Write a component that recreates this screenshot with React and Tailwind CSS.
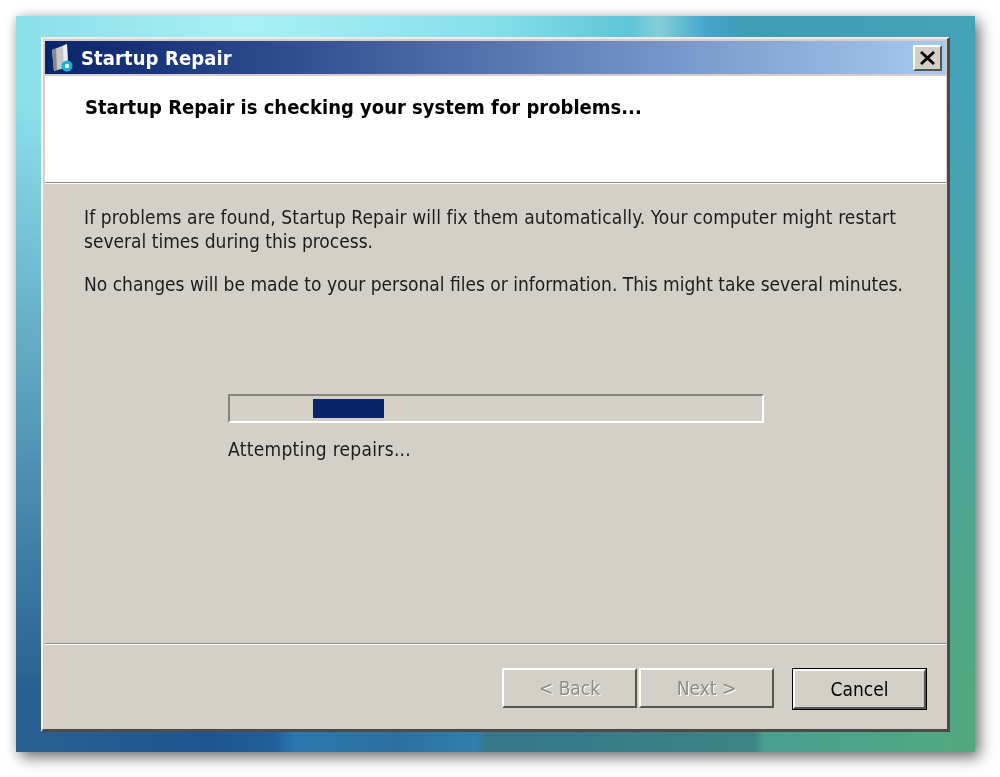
import React from 'react';

const font = "font-['DejaVu_Sans_Condensed','DejaVu_Sans',sans-serif]";

function DriveIcon() {
  return (
    <svg width="26" height="30" viewBox="0 0 26 30" className="shrink-0">
      <path d="M3 7 L18 1 L19 24 L5 28 Z" fill="#c4c7c7" />
      <path d="M3 7 L7 5.5 L8 27 L5 28 Z" fill="#868a8c" />
      <path d="M14 3 L18 1 L19 24 L15 25 Z" fill="#eceded" />
      <circle cx="18" cy="23" r="5.5" fill="#1fb0d8" />
      <circle cx="18" cy="23" r="2.2" fill="#e8fbff" />
    </svg>
  );
}

function WizardButton({ children, disabled }) {
  return (
    <div className={`h-10 flex items-center justify-center bg-[#d4d0c8] border-2 border-t-white border-l-white border-r-[#57554f] border-b-[#57554f] text-[19px] ${disabled ? "w-[135px] text-[#8f8c85] [text-shadow:1px_1px_0_#fff]" : "w-[133px] text-black"}`}>
      {children}
    </div>
  );
}

export default function App() {
  return (
    <div className={`w-[1000px] h-[777px] bg-white pt-4 pl-4 blur-[0.4px] ${font}`}>
      <div className="relative w-[959px] h-[736px] pt-[21px] pl-[25px] bg-[linear-gradient(to_right,#2a6090_0%,#1f5592_20%,#215e9a_27%,#2a78b0_29%,#2c70a0_40%,#2f80ae_48%,#35768a_49%,#3c8485_77%,#48a090_78%,#52a97f_100%)] shadow-[5px_6px_14px_rgba(0,0,0,0.5),0_0_10px_rgba(0,0,0,0.15)]">
        <div className="absolute inset-0 bg-[linear-gradient(to_right,#8adfe8_0%,#a8f0f6_24%,#85dfea_50%,#5fc5d8_64%,#84d0d8_67%,#45a5cc_72%,#3f9cb5_76%,#45a2b8_100%)] [mask-image:linear-gradient(to_bottom,black_12%,transparent_92%)]" />
        <div className="relative w-[909px] h-[695px] flex flex-col bg-[#d4d0c8] border-t-2 border-l-2 border-t-[#efebe3] border-l-white border-r-[3px] border-b-[3px] border-r-[#4b4a47] border-b-[#4b4a47] pt-0.5 pl-0.5 pr-px">
          <div className="h-[33px] flex items-center pl-1 pr-1 bg-[linear-gradient(to_right,#0a246a_0%,#2c4a8c_25%,#6f8fc4_65%,#a6caf0_100%)]">
            <DriveIcon />
            <span className="ml-1.5 text-white font-bold text-[20px] tracking-[0.1px] leading-none">Startup Repair</span>
            <div className="ml-auto w-[29px] h-[26px] flex items-center justify-center bg-[#d4d0c8] border-2 border-t-white border-l-white border-r-[#57554f] border-b-[#57554f]">
              <svg width="17" height="14" viewBox="0 0 17 14">
                <path d="M2 1 L15 13 M15 1 L2 13" stroke="#000" strokeWidth="2.8" />
              </svg>
            </div>
          </div>
          <div className="mt-0.5 h-[106px] bg-white pl-10 pt-[18px]">
            <h1 className="text-[20px] leading-[26px] font-bold text-black">Startup Repair is checking your system for problems...</h1>
          </div>
          <div className="h-[2px] bg-[#8d8a83] border-b border-white" />
          <div className="flex-1 flex flex-col pl-[39px] pt-[21px] text-[19px] text-[#1c1c1c]">
            <p className="leading-6 w-[860px]">
              <span className="block tracking-[0.13px]">If problems are found, Startup Repair will fix them automatically. Your computer might restart</span>
              <span className="block">several times during this process.</span>
            </p>
            <p className="leading-6 mt-[19px] whitespace-nowrap">No changes will be made to your personal files or information. This might take several minutes.</p>
            <div className="ml-[144px] mt-[98px] w-[536px] h-[29px] bg-[#d4d0c8] border-2 border-t-[#87847d] border-l-[#87847d] border-r-white border-b-white p-[3px]">
              <div className="h-full pl-[80px] bg-[#d4d0c8]">
                <div className="w-[71px] h-full bg-[#0a246a]" />
              </div>
            </div>
            <div className="ml-[144px] mt-[14px] leading-6 tracking-[0.3px]">Attempting repairs...</div>
          </div>
          <div className="h-[2px] bg-[#8d8a83] border-b border-white" />
          <div className="h-[84px] flex justify-end items-start pt-[23px] pr-[19px]">
            <div className="flex gap-0.5">
              <WizardButton disabled>&lt; Back</WizardButton>
              <WizardButton disabled>Next &gt;</WizardButton>
            </div>
            <div className="ml-[18px] border border-black">
              <WizardButton>Cancel</WizardButton>
            </div>
          </div>
        </div>
      </div>
    </div>
  );
}
